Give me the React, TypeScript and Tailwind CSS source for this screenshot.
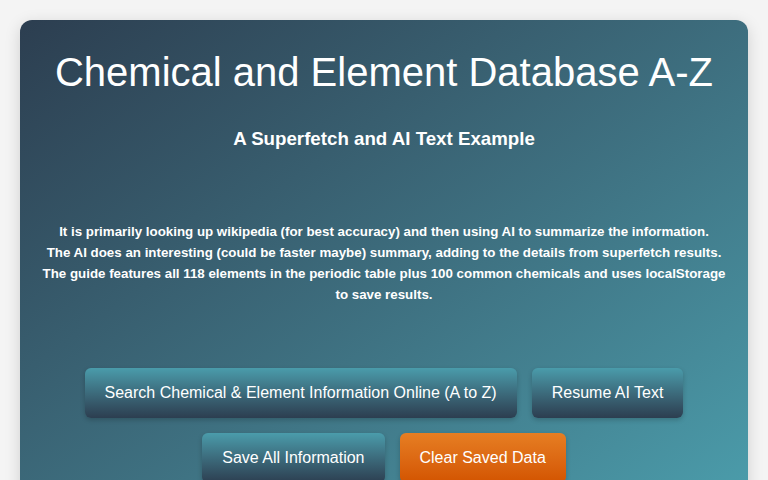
export default function App() {
  return (
    <main className="min-h-screen bg-[#f4f4f4] px-5 pt-5 font-['Liberation_Sans',Arial,sans-serif]">
      <div className="h-[520px] rounded-xl bg-gradient-to-br from-[#2c3e50] to-[#4ca1af] px-5 pt-[26px] text-center text-white shadow-[0_4px_16px_rgba(0,0,0,0.15)]">
        <h1 className="text-[40px] leading-[52px]">Chemical and Element Database A-Z</h1>
        <h2 className="mt-[30px] text-[18.72px] font-bold leading-[22px]">A Superfetch and AI Text Example</h2>
        <div className="mt-[71px] text-[13.33px] font-bold leading-[21px]">
          <p>It is primarily looking up wikipedia (for best accuracy) and then using AI to summarize the information.</p>
          <p>The AI does an interesting (could be faster maybe) summary, adding to the details from superfetch results.</p>
          <p>
            The guide features all 118 elements in the periodic table plus 100 common chemicals and uses localStorage to save results.
          </p>
        </div>
        <div className="mx-auto mt-[63px] flex max-w-[640px] flex-wrap justify-center gap-[15px]">
          <button className="h-[50px] rounded-md bg-gradient-to-b from-[#4a9cab] to-[#2c3e50] px-5 text-base text-white shadow-[0_2px_5px_rgba(0,0,0,0.2)]">
            Search Chemical &amp; Element Information Online (A to Z)
          </button>
          <button className="h-[50px] rounded-md bg-gradient-to-b from-[#4a9cab] to-[#2c3e50] px-5 text-base text-white shadow-[0_2px_5px_rgba(0,0,0,0.2)]">
            Resume AI Text
          </button>
        </div>
        <div className="mt-[15px] flex flex-wrap justify-center gap-[15px]">
          <button className="h-[50px] rounded-md bg-gradient-to-b from-[#4a9cab] to-[#2c3e50] px-5 text-base text-white shadow-[0_2px_5px_rgba(0,0,0,0.2)]">
            Save All Information
          </button>
          <button className="h-[50px] rounded-md bg-gradient-to-b from-[#e67e22] to-[#d35400] px-5 text-base text-white shadow-[0_2px_5px_rgba(0,0,0,0.2)]">
            Clear Saved Data
          </button>
        </div>
      </div>
    </main>
  )
}
